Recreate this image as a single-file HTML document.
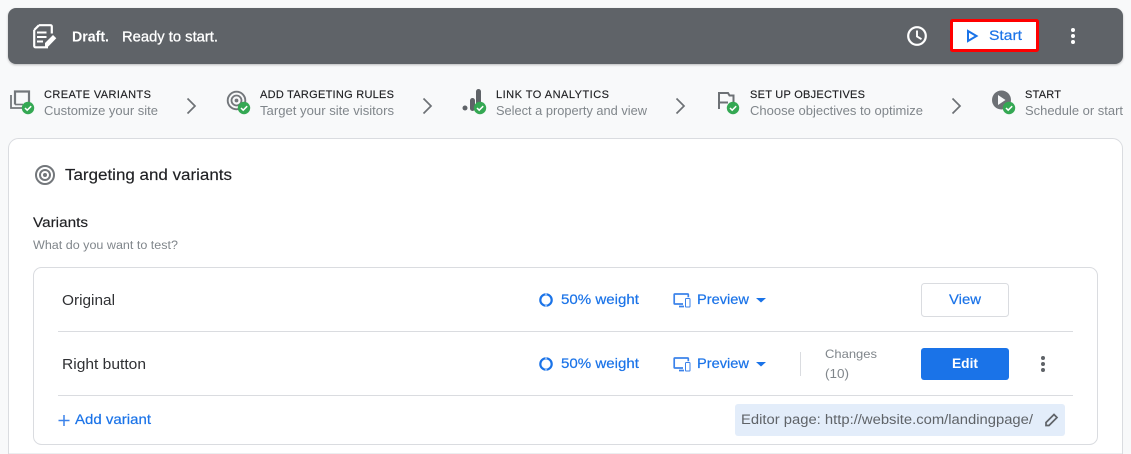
<!DOCTYPE html>
<html><head><meta charset="utf-8"><style>
html,body{margin:0;padding:0;width:1131px;height:454px;overflow:hidden;background:#f8f9fa}
svg{display:block}
text{font-family:"Liberation Sans",sans-serif}
.h{font-size:11px;fill:#202124;stroke:#202124;stroke-width:.15}
.s{font-size:12.8px;fill:#80868b}
.b{font-size:13.8px;fill:#1a73e8;stroke:#1a73e8;stroke-width:.2}
</style></head><body>
<svg width="1131" height="454" viewBox="0 0 1131 454" xmlns="http://www.w3.org/2000/svg">
<defs><filter id="sh" x="-2%" y="-10%" width="104%" height="125%"><feDropShadow dx="0" dy="1" stdDeviation="1" flood-color="#000" flood-opacity=".25"/></filter></defs>
<rect width="1131" height="454" fill="#f8f9fa"/>
<!-- top bar -->
<rect x="8" y="8" width="1115" height="56" rx="8" fill="#5f6368" filter="url(#sh)"/>
<path d="M39 25.200h11.500a1.300 1.300 0 0 1 1.300 1.300v7M34.200 30l4.800-4.800M34.200 30v16a1.300 1.300 0 0 0 1.300 1.300h12.500" fill="none" stroke="#fff" stroke-width="2.200"/>
<path d="M37 32.500h9.500M37 37h9.500M37 41.500h6" stroke="#fff" stroke-width="1.900" fill="none"/>
<path d="M45 46.500v-3.500l8-8 3.300 3.300-8 8.200z" fill="#fff"/>
<text x="72" y="41.500" font-size="15" font-weight="700" fill="#fff" textLength="37" lengthAdjust="spacingAndGlyphs">Draft.</text>
<text x="122" y="41.500" font-size="15" fill="#fff" stroke="#fff" stroke-width=".3" textLength="96" lengthAdjust="spacingAndGlyphs">Ready to start.</text>
<circle cx="917" cy="36" r="8.800" fill="none" stroke="#fff" stroke-width="2.200"/>
<path d="M917 30.500v6l4.500 2.700" fill="none" stroke="#fff" stroke-width="1.900"/>
<rect x="951.500" y="20.500" width="86" height="30" rx="1" fill="#fff" stroke="#f00" stroke-width="3"/>
<path d="M968 31v10l8.500-5z" fill="none" stroke="#1a73e8" stroke-width="2"/>
<text x="989" y="40" font-size="13.800" fill="#1a73e8" stroke="#1a73e8" stroke-width=".2" textLength="33" lengthAdjust="spacingAndGlyphs">Start</text>
<circle cx="1073" cy="30" r="2" fill="#fff"/><circle cx="1073" cy="36" r="2" fill="#fff"/><circle cx="1073" cy="42" r="2" fill="#fff"/>
<!-- steps -->
<text class="h" x="44" y="98" textLength="107">CREATE VARIANTS</text>
<text class="s" x="44" y="115" textLength="114" lengthAdjust="spacingAndGlyphs">Customize your site</text>
<text class="h" x="260" y="98" textLength="134">ADD TARGETING RULES</text>
<text class="s" x="260" y="115" textLength="134" lengthAdjust="spacingAndGlyphs">Target your site visitors</text>
<text class="h" x="496" y="98" textLength="113">LINK TO ANALYTICS</text>
<text class="s" x="496" y="115" textLength="151" lengthAdjust="spacingAndGlyphs">Select a property and view</text>
<text class="h" x="750" y="98" textLength="115">SET UP OBJECTIVES</text>
<text class="s" x="750" y="115" textLength="173" lengthAdjust="spacingAndGlyphs">Choose objectives to optimize</text>
<text class="h" x="1025" y="98" textLength="36">START</text>
<text class="s" x="1025" y="115" textLength="98" lengthAdjust="spacingAndGlyphs">Schedule or start</text>
<path d="M187.500 98.500l7.500 7.500-7.500 7.500M423.500 98.500l7.500 7.500-7.500 7.500M676.500 98.500l7.500 7.500-7.500 7.500M952.500 98.500l7.500 7.500-7.500 7.500" fill="none" stroke="#6d7175" stroke-width="1.700"/>
<!-- icon 1 -->
<path d="M15 104.500v-13h14v11" fill="none" stroke="#73777b" stroke-width="2.200"/>
<path d="M15 104.500h8" fill="none" stroke="#73777b" stroke-width="1.600"/>
<path d="M11 95v13h12" fill="none" stroke="#73777b" stroke-width="1.800"/>
<!-- icon 2 -->
<g fill="none" stroke="#73777b"><circle cx="236.500" cy="100.500" r="8.800" stroke-width="1.900"/><circle cx="236.500" cy="100.500" r="5" stroke-width="1.800"/></g><circle cx="236.500" cy="100.500" r="1.900" fill="#73777b"/>
<!-- icon 3 -->
<circle cx="465" cy="108" r="2.500" fill="#5f6368"/>
<rect x="470" y="98" width="5" height="13" rx="2.500" fill="#5f6368"/>
<rect x="476" y="89" width="5" height="20" rx="2.500" fill="#5f6368"/>
<!-- icon 4 -->
<path d="M719 109v-16h9l1.500 2.500h4v7M719 102.500h9" fill="none" stroke="#6d7175" stroke-width="2"/>
<!-- icon 5 -->
<circle cx="1001.500" cy="100" r="9.500" fill="#6d7175"/><path d="M998 95v10l7.500-5z" fill="#f8f9fa"/>
<!-- checks -->
<circle cx="28" cy="108" r="6.200" fill="#34a853"/><path d="M25 108l2.200 2.200 4-4" fill="none" stroke="#fff" stroke-width="1.500"/>
<circle cx="244" cy="108" r="6.200" fill="#34a853"/><path d="M241 108l2.200 2.200 4-4" fill="none" stroke="#fff" stroke-width="1.500"/>
<circle cx="480" cy="108" r="6.200" fill="#34a853"/><path d="M477 108l2.200 2.200 4-4" fill="none" stroke="#fff" stroke-width="1.500"/>
<circle cx="733" cy="108" r="6.200" fill="#34a853"/><path d="M730 108l2.200 2.200 4-4" fill="none" stroke="#fff" stroke-width="1.500"/>
<circle cx="1009" cy="108" r="6.200" fill="#34a853"/><path d="M1006 108l2.200 2.200 4-4" fill="none" stroke="#fff" stroke-width="1.500"/>
<!-- card -->
<path d="M8.500 454V148.500a10 10 0 0 1 10-10H1112.500a10 10 0 0 1 10 10V454z" fill="#fff" stroke="#dadce0"/>
<g fill="none" stroke="#73777b"><circle cx="45" cy="175" r="9" stroke-width="2"/><circle cx="45" cy="175" r="5" stroke-width="2"/></g><circle cx="45" cy="175" r="2" fill="#73777b"/>
<text x="65" y="180" font-size="15.500" fill="#202124" stroke="#202124" stroke-width=".15" textLength="167" lengthAdjust="spacingAndGlyphs">Targeting and variants</text>
<text x="33" y="227" font-size="13.500" fill="#202124" stroke="#202124" stroke-width=".15" textLength="55" lengthAdjust="spacingAndGlyphs">Variants</text>
<text x="33" y="249" font-size="11.500" fill="#80868b" textLength="145" lengthAdjust="spacingAndGlyphs">What do you want to test?</text>
<!-- inner -->
<rect x="33.500" y="267.500" width="1064" height="177" rx="8" fill="#fff" stroke="#dadce0"/>
<path d="M58 331.500h1015M58 395.500h1015" stroke="#dadce0"/>
<text x="62" y="305" font-size="14.500" fill="#303134" textLength="53" lengthAdjust="spacingAndGlyphs">Original</text>
<text x="62" y="369" font-size="14.500" fill="#303134" textLength="84" lengthAdjust="spacingAndGlyphs">Right button</text>
<g id="r1">
<circle cx="546" cy="300" r="5.700" fill="none" stroke="#1a73e8" stroke-width="2.200"/>
<path d="M546 293.500v1.500M546 305v1.500" stroke="#fff" stroke-width="1"/>
<text class="b" x="561" y="304" textLength="78" lengthAdjust="spacingAndGlyphs">50% weight</text>
<path d="M683 304h-8a.8.8 0 0 1-.8-.8v-8.400a.8.8 0 0 1 .8-.8h12.500a.8.8 0 0 1 .8.800v2.500M679 306.500h5" fill="none" stroke="#3b82ea" stroke-width="1.700"/>
<rect x="685.500" y="298.500" width="4.500" height="8.500" rx=".8" fill="none" stroke="#3b82ea" stroke-width="1"/>
<text class="b" x="697" y="304" textLength="52" lengthAdjust="spacingAndGlyphs">Preview</text>
<path d="M756 298h10l-5 4.500z" fill="#1a73e8"/>
</g>
<use href="#r1" y="64"/>
<rect x="800" y="352" width="1" height="24" fill="#dadce0"/>
<rect x="921.500" y="283.500" width="87" height="33" rx="3" fill="#fff" stroke="#dadce0"/>
<text x="949" y="304" font-size="13.800" fill="#1a73e8" stroke="#1a73e8" stroke-width=".2" textLength="32" lengthAdjust="spacingAndGlyphs">View</text>
<text x="825" y="358" font-size="12" fill="#80868b" textLength="52" lengthAdjust="spacingAndGlyphs">Changes</text>
<text x="825" y="378" font-size="12.500" fill="#80868b" textLength="24" lengthAdjust="spacingAndGlyphs">(10)</text>
<rect x="921" y="348" width="88" height="32" rx="3" fill="#1a73e8"/>
<text x="952" y="368" font-size="13.800" font-weight="700" fill="#fff" textLength="26" lengthAdjust="spacingAndGlyphs">Edit</text>
<circle cx="1043" cy="358" r="2" fill="#5f6368"/><circle cx="1043" cy="364" r="2" fill="#5f6368"/><circle cx="1043" cy="370" r="2" fill="#5f6368"/>
<path d="M58.500 420.500h11M64 415v11" stroke="#3b82ea" stroke-width="1.500"/>
<text class="b" x="75" y="424" textLength="76" lengthAdjust="spacingAndGlyphs">Add variant</text>
<rect x="735" y="404" width="330" height="32" rx="3" fill="#e3edfa"/>
<text x="741" y="424" font-size="13.500" fill="#5f6368" textLength="292" lengthAdjust="spacingAndGlyphs">Editor page: http://website.com/landingpage/</text>
<path d="M1046 425.500v-3l8-8 3 3-8 8z" fill="none" stroke="#5f6368" stroke-width="1.700"/>
</svg>
</body></html>
